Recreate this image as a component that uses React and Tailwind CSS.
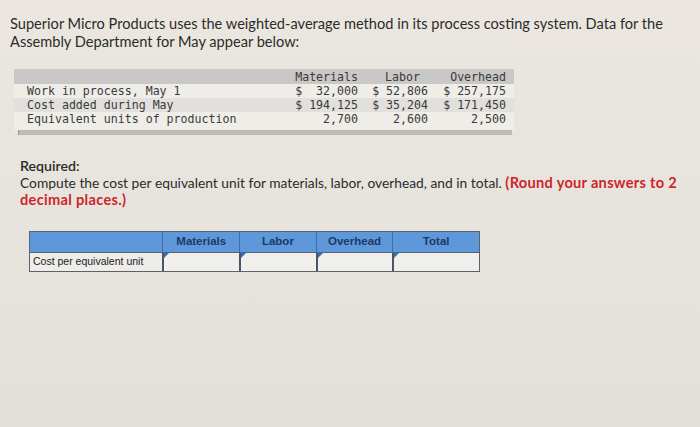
import React from 'react';

const DATA_ROWS = [
  { label: 'Work in process, May 1', m: '$  32,000', l: '$ 52,806', o: '$ 257,175', shade: 'bg-[#efede8]' },
  { label: 'Cost added during May', m: '$ 194,125', l: '$ 35,204', o: '$ 171,450', shade: 'bg-[#e2e0dc]' },
  { label: 'Equivalent units of production', m: '2,700', l: '2,600', o: '2,500', shade: 'bg-[#efede8]' },
];

const ANSWER_COLS = [
  { name: 'Materials', w: 'w-[77px]' },
  { name: 'Labor', w: 'w-[77px]' },
  { name: 'Overhead', w: 'w-[77px]' },
  { name: 'Total', w: 'w-[87px]' },
];

const DataTable = () => (
  <div className="ml-[14px] w-[500px] font-['DejaVu_Sans_Mono',monospace] text-[11.6px] leading-[14px] text-[#3a3a3a] whitespace-pre">
    <div className="flex h-[15px] items-center bg-[#c9c8c7]">
      <div className="w-[281px]" />
      <div className="w-[63px] text-right">Materials</div>
      <div className="w-[70px] pl-[27px]">Labor</div>
      <div className="w-[78px] text-right">Overhead</div>
    </div>
    {DATA_ROWS.map((row) => (
      <div key={row.label} className={`flex h-[14px] items-center ${row.shade}`}>
        <div className="w-[281px] pl-[13px]">{row.label}</div>
        <div className="w-[63px] text-right">{row.m}</div>
        <div className="w-[70px] text-right">{row.l}</div>
        <div className="w-[78px] text-right">{row.o}</div>
      </div>
    ))}
    <div className="h-[4px] bg-[#efede8]" />
    <div className="ml-[4px] h-[5px] w-[494px] border-l border-[#9a9a9a] bg-[#bdbcbb]" />
  </div>
);

const AnswerTable = () => (
  <div className="ml-[29px] flex w-[451px] flex-col border border-[#5a6270] font-['Liberation_Sans',Arial,sans-serif]">
    <div className="flex h-[20px] bg-[#5f98da]">
      <div className="w-[133px]" />
      {ANSWER_COLS.map((c) => (
        <div
          key={c.name}
          className={`${c.w} flex items-center justify-center border-l border-[#3f6fa8] text-[11.5px] font-bold text-[#1b3a66]`}
        >
          {c.name}
        </div>
      ))}
    </div>
    <div className="flex h-[19px] border-t border-[#5a6270] bg-[#efede9]">
      <div className="flex w-[133px] items-center pl-[3px] text-[10.5px] text-[#222]">Cost per equivalent unit</div>
      {ANSWER_COLS.map((c) => (
        <div key={c.name} className={`${c.w} relative border-l-2 border-[#4b5566] bg-[#f1efeb]`}>
          <span className="absolute left-0 top-0 h-0 w-0 border-r-[5px] border-t-[5px] border-r-transparent border-t-[#2f6fbf]" />
        </div>
      ))}
    </div>
  </div>
);

export default function App() {
  return (
    <div className="h-[427px] w-[700px] overflow-hidden bg-gradient-to-b from-[#ebe7e0] to-[#e1e1da] font-['Lato','Open_Sans',sans-serif] text-[#2b2b2b]">
      <p className="px-[10px] pt-[15px] text-[14.6px] leading-[18px]">
        Superior Micro Products uses the weighted-average method in its process costing system. Data for the
        <br />
        Assembly Department for May appear below:
      </p>
      <div className="mt-[18px]">
        <DataTable />
      </div>
      <div className="mt-[22px] px-[20px] text-[13.8px] leading-[17px]">
        <div className="text-[14.2px] font-semibold">Required:</div>
        <div className="whitespace-nowrap">
          Compute the cost per equivalent unit for materials, labor, overhead, and in total.{' '}
          <span className="text-[14.6px] font-bold tracking-[0.3px] text-[#d0242b]">(Round your answers to 2</span>
        </div>
        <div className="text-[14.6px] font-bold tracking-[0.3px] text-[#d0242b]">decimal places.)</div>
      </div>
      <div className="mt-[23px]">
        <AnswerTable />
      </div>
    </div>
  );
}
